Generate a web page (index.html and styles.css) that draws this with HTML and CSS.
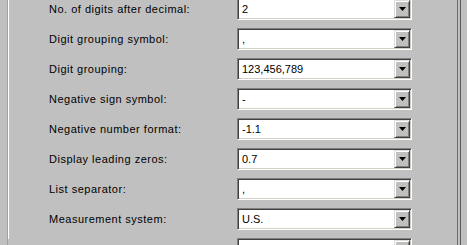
FILE: index.html
```html
<!DOCTYPE html>
<html lang="en">
<head>
  <meta charset="UTF-8">
  <title>Customize Format - Numbers</title>
  <link rel="stylesheet" href="styles.css">
</head>
<body>
  <div class="frame">
    <!-- Panel de opciones -->
    <div class="panel">
      <div class="panel-inner">
        <div class="row">
          <label class="label">No. of digits after decimal:</label>
          <div class="combo"><span class="value">2</span><span class="drop"><svg width="7" height="4" viewBox="0 0 7 4"><polygon points="0,0 7,0 3.5,4" fill="#000"/></svg></span></div>
        </div>
        <div class="row">
          <label class="label">Digit grouping symbol:</label>
          <div class="combo"><span class="value">,</span><span class="drop"><svg width="7" height="4" viewBox="0 0 7 4"><polygon points="0,0 7,0 3.5,4" fill="#000"/></svg></span></div>
        </div>
        <div class="row">
          <label class="label">Digit grouping:</label>
          <div class="combo"><span class="value">123,456,789</span><span class="drop"><svg width="7" height="4" viewBox="0 0 7 4"><polygon points="0,0 7,0 3.5,4" fill="#000"/></svg></span></div>
        </div>
        <div class="row">
          <label class="label">Negative sign symbol:</label>
          <div class="combo"><span class="value">-</span><span class="drop"><svg width="7" height="4" viewBox="0 0 7 4"><polygon points="0,0 7,0 3.5,4" fill="#000"/></svg></span></div>
        </div>
        <div class="row">
          <label class="label">Negative number format:</label>
          <div class="combo"><span class="value">-1.1</span><span class="drop"><svg width="7" height="4" viewBox="0 0 7 4"><polygon points="0,0 7,0 3.5,4" fill="#000"/></svg></span></div>
        </div>
        <div class="row">
          <label class="label">Display leading zeros:</label>
          <div class="combo"><span class="value">0.7</span><span class="drop"><svg width="7" height="4" viewBox="0 0 7 4"><polygon points="0,0 7,0 3.5,4" fill="#000"/></svg></span></div>
        </div>
        <div class="row">
          <label class="label">List separator:</label>
          <div class="combo"><span class="value">,</span><span class="drop"><svg width="7" height="4" viewBox="0 0 7 4"><polygon points="0,0 7,0 3.5,4" fill="#000"/></svg></span></div>
        </div>
        <div class="row">
          <label class="label">Measurement system:</label>
          <div class="combo"><span class="value">U.S.</span><span class="drop"><svg width="7" height="4" viewBox="0 0 7 4"><polygon points="0,0 7,0 3.5,4" fill="#000"/></svg></span></div>
        </div>
        <div class="row">
          <label class="label">Standard digits:</label>
          <div class="combo"><span class="value"></span><span class="drop"><svg width="7" height="4" viewBox="0 0 7 4"><polygon points="0,0 7,0 3.5,4" fill="#000"/></svg></span></div>
        </div>
      </div>
    </div>
    <!-- Borde derecho de la ventana -->
    <div class="edge"></div>
  </div>
</body>
</html>
```

FILE: styles.css
```css
/* General */
body {
  margin: 0;
  padding: 0;
  background-color: #c0c0c0;
  font-family: "Liberation Sans", Arial, sans-serif;
  font-size: 11px;
  color: #000000;
  height: 245px;
  overflow: hidden;
}
/* Marco */
.frame {
  display: flex;
  height: 245px;
}
.panel {
  margin-left: 7px;
  width: 449px;
  border-left: 1px solid #a0a0a0;
  border-right: 1px solid #6e6e6e;
}
.panel-inner {
  height: 100%;
  border-left: 1px solid #ffffff;
  padding-left: 40px;
  margin-top: -6px;
}
.edge {
  margin-left: 2px;
  width: 0;
  border-left: 1px solid #5a5a5a;
}
/* Filas */
.row {
  display: flex;
  align-items: center;
  height: 30px;
}
.label {
  width: 188px;
  letter-spacing: 0.5px;
}
/* Lista desplegable */
.combo {
  box-sizing: border-box;
  display: flex;
  align-items: center;
  width: 175px;
  height: 22px;
  padding: 2px;
  background-color: #ffffff;
  border-top: 1px solid #808080;
  border-left: 1px solid #808080;
  border-bottom: 1px solid #ffffff;
  border-right: 1px solid #ffffff;
  box-shadow: inset 1px 1px 0 #404040, inset -1px -1px 0 #d4d0c8;
}
.value {
  flex: 1;
  padding-left: 2px;
}
.drop {
  box-sizing: border-box;
  display: flex;
  align-items: center;
  justify-content: center;
  width: 16px;
  height: 18px;
  margin-right: -1px;
  background-color: #c0c0c0;
  border-top: 1px solid #dcdcdc;
  border-left: 1px solid #dcdcdc;
  border-bottom: 1px solid #404040;
  border-right: 1px solid #404040;
  box-shadow: inset 1px 1px 0 #ffffff, inset -1px -1px 0 #808080;
}
```
